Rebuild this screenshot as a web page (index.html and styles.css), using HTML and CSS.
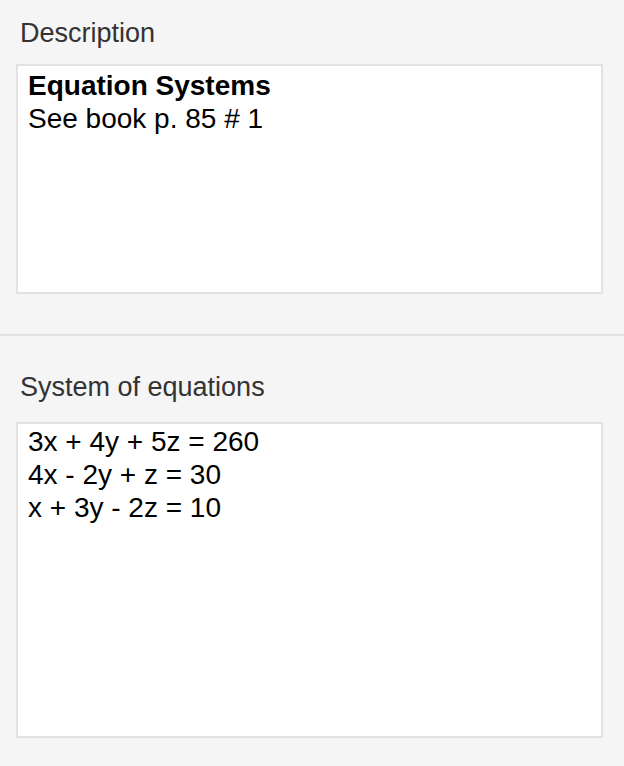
FILE: index.html
```html
<!DOCTYPE html>
<html>
<head>
<meta charset="utf-8">
<link rel="stylesheet" href="styles.css">
</head>
<body>
<div class="panel">
  <section class="field field-desc">
    <div class="label">Description</div>
    <div class="box box-desc">
      <div class="line"><strong>Equation Systems</strong></div>
      <div class="line">See book p. 85 # 1</div>
    </div>
  </section>
  <div class="separator"></div>
  <section class="field field-eq">
    <div class="label">System of equations</div>
    <div class="box box-eq">
      <div class="line">3x + 4y + 5z = 260</div>
      <div class="line">4x - 2y + z = 30</div>
      <div class="line">x + 3y - 2z = 10</div>
    </div>
  </section>
</div>
</body>
</html>
```

FILE: styles.css
```css
html, body {
  margin: 0;
  padding: 0;
  background: #f5f5f5;
}
body {
  width: 624px;
  height: 766px;
  overflow: hidden;
  font-family: "Liberation Sans", Arial, sans-serif;
}
.panel {
  display: flex;
  flex-direction: column;
}
.field {
  display: flex;
  flex-direction: column;
  padding: 0 21px 0 16px;
}
.field-desc {
  padding-top: 18px;
  padding-bottom: 40px;
}
.field-eq {
  padding-top: 36px;
}
.label {
  font-size: 27px;
  line-height: 31px;
  color: #333333;
  padding-left: 4px;
}
.field-desc .label {
  margin-bottom: 15px;
}
.field-eq .label {
  margin-bottom: 19px;
}
.box {
  background: #ffffff;
  border: 2px solid #e2e2e2;
  box-sizing: border-box;
  padding: 3px 10px;
  color: #000000;
  font-size: 28px;
  line-height: 33px;
}
.box-desc {
  height: 230px;
}
.box-eq {
  height: 316px;
  padding-top: 1px;
}
.line strong {
  font-weight: bold;
}
.separator {
  height: 2px;
  background: #e2e2e2;
}
```
